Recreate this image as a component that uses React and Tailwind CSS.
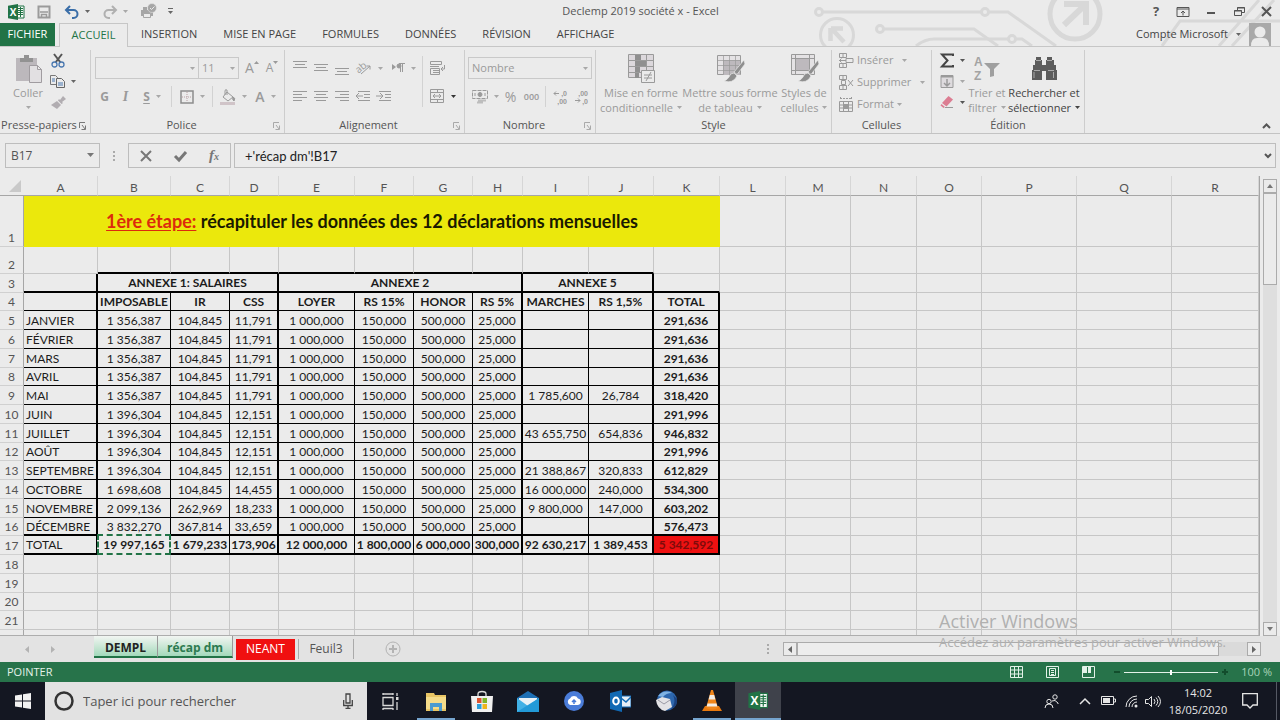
const MONTHS = [
    ['JANVIER', '1 356,387', '104,845', '11,791', '', '', '291,636'],
    ['FÉVRIER', '1 356,387', '104,845', '11,791', '', '', '291,636'],
    ['MARS', '1 356,387', '104,845', '11,791', '', '', '291,636'],
    ['AVRIL', '1 356,387', '104,845', '11,791', '', '', '291,636'],
    ['MAI', '1 356,387', '104,845', '11,791', '1 785,600', '26,784', '318,420'],
    ['JUIN', '1 396,304', '104,845', '12,151', '', '', '291,996'],
    ['JUILLET', '1 396,304', '104,845', '12,151', '43 655,750', '654,836', '946,832'],
    ['AOÛT', '1 396,304', '104,845', '12,151', '', '', '291,996'],
    ['SEPTEMBRE', '1 396,304', '104,845', '12,151', '21 388,867', '320,833', '612,829'],
    ['OCTOBRE', '1 698,608', '104,845', '14,455', '16 000,000', '240,000', '534,300'],
    ['NOVEMBRE', '2 099,136', '262,969', '18,233', '9 800,000', '147,000', '603,202'],
    ['DÉCEMBRE', '3 832,270', '367,814', '33,659', '', '', '576,473'],
];
const ANNEXE2 = ['1 000,000', '150,000', '500,000', '25,000'];
const HEADINGS = ['', 'IMPOSABLE', 'IR', 'CSS', 'LOYER', 'RS 15%', 'HONOR', 'RS 5%', 'MARCHES', 'RS 1,5%', 'TOTAL'];
const TOTALS = ['TOTAL', '19 997,165', '1 679,233', '173,906', '12 000,000', '1 800,000', '6 000,000', '300,000', '92 630,217', '1 389,453', '5 342,592'];
const LETTERS = 'ABCDEFGHIJKLMNOPQR'.split('');
const COL_WIDTHS = [
    'w-[24px]', 'w-[74px]', 'w-[73px]', 'w-[59px]', 'w-[49px]', 'w-[76px]', 'w-[59px]', 'w-[59px]', 'w-[50px]',
    'w-[66px]', 'w-[65px]', 'w-[66px]', 'w-[66px]', 'w-[65px]', 'w-[66px]', 'w-[65px]', 'w-[95px]', 'w-[95px]', '',
];
// columns followed by a thick vertical rule: A, D, H, J, K
const THICK = [0, 3, 7, 9, 10];

const Caret = ({ className = 'text-[#a8a8a8]' }) => (
    <svg className={`shrink-0 ${className}`} width="5" height="3" viewBox="0 0 5 3" fill="currentColor">
        <path d="M0 0h5L2.5 3z" />
    </svg>
);

const Svg = ({ w = 16, h = 16, className = '', children }) => (
    <svg className={`shrink-0 overflow-visible ${className}`} width={w} height={h} viewBox={`0 0 ${w} ${h}`} fill="none" stroke="currentColor">
        {children}
    </svg>
);

const ExcelLogo = ({ w = 17, h = 16 }) => (
    <svg width={w} height={h} viewBox="0 0 17 16" className="shrink-0">
        <path d="M8 2h8v12H8z" fill="#f4f8f5" stroke="#217346" />
        <path d="M10 4.5h5M10 6.5h5M10 8.5h5M10 10.5h5M12.5 3v10" stroke="#217346" />
        <path d="M0 1.8L10 0v16L0 14.2z" fill="#217346" />
        <text x="5" y="11.5" textAnchor="middle" fontSize="10" fontWeight="700" fill="#fff" fontFamily="Open Sans">X</text>
    </svg>
);

/* ---------- title bar ---------- */

const Circuit = () => (
    <svg className="pointer-events-none absolute right-0 top-0" width="470" height="46" viewBox="810 0 470 46" fill="none" stroke="#d8d8d8" strokeWidth="3">
        <circle cx="819" cy="12" r="3.5" />
        <path d="M823 12h158M989 12h19l48 34" />
        <circle cx="985" cy="12" r="3.5" />
        <circle cx="837" cy="35" r="16.5" />
        <path d="M843 28.500h-12M830.500 41V28M831 28l13 14" strokeWidth="4.500" />
        <circle cx="880" cy="29" r="3.5" />
        <path d="M884 29h90l24 17" />
        <path d="M916 46q9-7 18-7h74" />
        <circle cx="1012" cy="39" r="3.5" />
        <path d="M1016 39h6l10 7" />
        <circle cx="1075" cy="14" r="25" strokeWidth="5" />
        <path d="M1064 4h22v21M1086 4l-22 21" strokeWidth="6" />
        <path d="M1162 46l18-25h100M1219 46l40-46M1232 46l42-46" />
    </svg>
);

const TitleBar = () => (
    <div className="flex h-[23px] items-center">
        <div className="flex flex-1 items-center pl-[8px] text-[#9b9b9b]">
            <ExcelLogo />
            <button aria-label="Enregistrer" className="ml-[12px]">
                <Svg w={14} h={14}>
                    <path d="M1.5 1.5h11v11h-11z" strokeWidth="2" />
                    <path d="M3 7h8M4.5 13V9.500h5V13" strokeWidth="1.500" />
                </Svg>
            </button>
            <button aria-label="Annuler" className="ml-[13px] flex items-center gap-[6px] text-[#3a6ea8]">
                <Svg w={15} h={14}>
                    <path d="M2 5h7.500a4 4 0 010 8H8M6 1L2 5l4 4" strokeWidth="2" />
                </Svg>
                <Caret className="text-[#666]" />
            </button>
            <button aria-label="Rétablir" className="ml-[13px] flex items-center gap-[5px] text-[#b0b0b0]">
                <Svg w={15} h={14}>
                    <path d="M13 5H5.500a4 4 0 000 8H7M9 1l4 4-4 4" strokeWidth="2" />
                </Svg>
                <Caret />
            </button>
            <button aria-label="Aperçu et impression" className="ml-[13px] text-[#a6a6a6]">
                <Svg w={16} h={15}>
                    <path d="M0 6h12v6H0zM2 3h4v3H2z" fill="currentColor" stroke="none" />
                    <path d="M2.500 9.500h7v4h-7z" fill="#ebebeb" />
                    <circle cx="11" cy="4" r="4.500" fill="currentColor" stroke="#ebebeb" strokeWidth=".5" />
                    <path d="M9 4l1.500 1.500L13.500 2.500" stroke="#ebebeb" />
                </Svg>
            </button>
            <button aria-label="Personnaliser" className="ml-[11px] text-[#666]">
                <Svg w={5} h={7}>
                    <path d="M0 .5h5" />
                    <path d="M0 3h5L2.500 6z" fill="currentColor" stroke="none" />
                </Svg>
            </button>
        </div>
        <h1 className="text-[11px] text-[#555]">Declemp 2019 société x - Excel</h1>
        <div className="flex flex-1 items-center justify-end gap-[14px] pr-[7px] text-[#555]">
            <button aria-label="Aide" className="w-[12px] text-[13px] font-bold leading-none">?</button>
            <button aria-label="Options d'affichage du ruban">
                <Svg w={14} h={11}>
                    <path d="M1 1.500h12v9H1zM1 3h12M7 9.500V5M5 7l2-2 2 2" />
                </Svg>
            </button>
            <button aria-label="Réduire">
                <Svg w={14} h={11}>
                    <path d="M3 7h8" strokeWidth="2" />
                </Svg>
            </button>
            <button aria-label="Restaurer">
                <Svg w={14} h={11}>
                    <path d="M2.500 4.500h7v5h-7zM5.500 4V1.500h7v5H10M2 5h8M5 2h8" />
                </Svg>
            </button>
            <button aria-label="Fermer">
                <Svg w={13} h={11}>
                    <path d="M2 1l9 9M11 1l-9 9" strokeWidth="2" />
                </Svg>
            </button>
        </div>
    </div>
);

const TABS = ['INSERTION', 'MISE EN PAGE', 'FORMULES', 'DONNÉES', 'RÉVISION', 'AFFICHAGE'];

const RibbonTabs = () => (
    <nav className="flex h-[24px] items-stretch border-b border-[#c6c6c6] text-[11px] text-[#444]">
        <button className="w-[55px] bg-[#217346] text-white">FICHIER</button>
        <button className="relative -mb-px ml-[4px] w-[69px] border border-b-0 border-[#c6c6c6] bg-[#ebebeb] text-[#217346]">ACCUEIL</button>
        {TABS.map((t) => (
            <button key={t} className="px-[13px]">{t}</button>
        ))}
        <button className="ml-auto flex items-center gap-[8px] pr-[9px]">
            Compte Microsoft
            <Caret className="text-[#666]" />
            <svg width="22" height="23" viewBox="0 0 22 23">
                <path d="M0 0h22v23H0z" fill="#a9a9a9" />
                <circle cx="11" cy="9" r="5.500" fill="#ebebeb" />
                <path d="M2 23q0-8 6-8h6q6 0 6 8z" fill="#ebebeb" />
            </svg>
        </button>
    </nav>
);

/* ---------- ribbon ---------- */

const Group = ({ label, width, launcher, children }) => (
    <section className={`flex shrink-0 flex-col ${width}`}>
        <div className="flex flex-1">
            <div className="min-w-0 flex-1">{children}</div>
            <div className="mt-[3px] w-px bg-[#cdcdcd]" />
        </div>
        <div className="relative flex h-[15px] items-center justify-center border-r border-[#cdcdcd] text-[11px] font-medium text-[#555]">
            <span className={launcher ? 'pr-[12px]' : ''}>{label}</span>
            {launcher && (
                <button aria-label={`Options ${label}`} className={`absolute right-[4px] ${launcher}`}>
                    <Svg w={7} h={8}>
                        <path d="M.5 6V.5H6M3 3l3 4M6.500 3.500v4h-4" />
                    </Svg>
                </button>
            )}
        </div>
    </section>
);

const Tool = ({ label, caret, width = 'w-[21px]', caretColor, children }) => (
    <button aria-label={label} className={`flex h-[20px] shrink-0 items-center justify-center gap-[6px] ${width}`}>
        {children}
        {caret && <Caret className={caretColor} />}
    </button>
);

const Lines = ({ rows, h = 12 }) => (
    <Svg w={14} h={h}>
        {rows.map(([a, b, y]) => (
            <path key={y} d={`M${a} ${y}.5H${b}`} />
        ))}
    </Svg>
);

const Big = ({ width, lines, className = 'text-[#9a9a9a]', caretColor, children }) => (
    <button className={`flex shrink-0 flex-col items-center text-[11px] leading-[15px] ${width} ${className}`}>
        <span className="flex h-[34px] items-center">{children}</span>
        <span className="whitespace-nowrap">{lines[0]}</span>
        <span className="flex items-center gap-[4px] whitespace-nowrap">
            {lines[1]}
            <Caret className={caretColor} />
        </span>
    </button>
);

const Divider = () => <span className="mx-[3px] h-[21px] w-px shrink-0 bg-[#d2d2d2]" />;

const Select = ({ label, width, value }) => (
    <div className={`relative h-[22px] ${width}`}>
        <select aria-label={label} defaultValue={value} className="block h-full w-full appearance-none border border-[#c9c9c9] pl-[3px] text-[11px] text-[#9a9a9a]">
            <option>{value}</option>
        </select>
        <span className="pointer-events-none absolute inset-y-0 right-[4px] flex items-center">
            <Caret />
        </span>
    </div>
);

const Brush = () => (
    <>
        <path d="M29 7L19 19l3 2.500L30 11z" fill="#8f8f8f" stroke="#ebebeb" strokeWidth=".7" />
        <path d="M19 20q-4 0-5 4-2 3-5 4 9 3 13-5z" fill="#8f8f8f" stroke="#ebebeb" strokeWidth=".7" />
    </>
);

const CellIcon = ({ kind }) => (
    <Svg w={16} h={15}>
        {kind !== 'format' && <path d="M1.500.500h7v4h-7zM5 .5v4M1.500 10.500h7v4h-7zM5 10.500v4" />}
        {kind === 'insert' && <path d="M8 5.500h7v4H8zM8 7.500H1M3.500 5.500l-2 2 2 2" />}
        {kind === 'delete' && <path d="M3.500 5.500h4v4h-4zM10 5l5 6M15 5l-5 6" />}
        {kind === 'format' && (
            <>
                <path d="M2.500 0v3M13.500 0v3M2 1.500h12" strokeDasharray="2 1" />
                <path d="M1.500 4.500h13v10h-13zM5.500 4v10M10.500 4v10M1 8h14M1 11h14" />
                <path d="M5 7h6v5H5z" fill="currentColor" stroke="none" />
            </>
        )}
    </Svg>
);

const Ribbon = () => (
    <div className="flex h-[87px] shrink-0 items-stretch overflow-hidden border-b border-[#c3c3c3] text-[#9a9a9a]">
        <Group label="Presse-papiers" width="w-[91px]" launcher="text-[#777]">
            <div className="flex pl-[11px]">
                <button className="flex w-[34px] flex-col items-center pt-[7px] text-[11px] leading-[17px]">
                    <Svg w={27} h={30} className="text-[#a9a5a9]">
                        <path d="M1 4h21v23H1z" fill="#bcb8bc" stroke="none" />
                        <path d="M5 4h4V1h5v3h4v4H5z" fill="#929292" stroke="none" />
                        <path d="M14.500 11.500h8l4 4v13h-12zM22.500 11.500v4h4" fill="#e2e0e2" stroke="#a09ca0" />
                    </Svg>
                    <span>Coller</span>
                    <Caret className="mt-[5px] text-[#a8a8a8]" />
                </button>
                <div className="flex flex-col gap-[1px] pl-[3px] pt-[3px]">
                    <Tool label="Couper" width="w-[20px]">
                        <Svg w={14} h={15}>
                            <path d="M3 1l6.500 8.500M11 1L4.500 9.500" stroke="#555" strokeWidth="2" />
                            <circle cx="3.500" cy="11.500" r="2.500" stroke="#4a78b0" strokeWidth="1.300" />
                            <circle cx="10.500" cy="11.500" r="2.500" stroke="#4a78b0" strokeWidth="1.300" />
                        </Svg>
                    </Tool>
                    <Tool label="Copier" width="w-[30px]" caret caretColor="text-[#666]">
                        <Svg w={15} h={13}>
                            <path d="M.5.500h5l2 2v7h-7z" stroke="#777" />
                            <path d="M6.500 3.500h5l3 3v6h-8z" fill="#ebebeb" stroke="#666" />
                            <path d="M2 4h3M2 6h3M8 8h5M8 10h5" stroke="#4a78b0" />
                        </Svg>
                    </Tool>
                    <Tool label="Reproduire la mise en forme" width="w-[20px]">
                        <Svg w={15} h={13}>
                            <path d="M12 0l3 3-4 3-2-2zM8 3l4 4-1.500 1L7 4.500zM6 5l4 4-4 4-6-4z" fill="#b1adb1" stroke="none" />
                        </Svg>
                    </Tool>
                </div>
            </div>
        </Group>

        <Group label="Police" width="w-[194px]" launcher="text-[#a9a9a9]">
            <div className="flex h-[32px] items-end pl-[4px]">
                <Select label="Police" width="w-[104px]" value="" />
                <Select label="Taille" width="-ml-px w-[41px]" value="11" />
                <button aria-label="Augmenter la taille" className="ml-[6px] flex text-[14px] leading-[22px]">
                    A<Svg w={5} h={3} className="mt-[4px]"><path d="M0 3h5L2.500 0z" fill="currentColor" stroke="none" /></Svg>
                </button>
                <button aria-label="Réduire la taille" className="ml-[7px] flex text-[12px] leading-[22px]">
                    A<Svg w={5} h={3} className="mt-[4px]"><path d="M0 0h5L2.500 3z" fill="currentColor" stroke="none" /></Svg>
                </button>
            </div>
            <div className="flex items-center pl-[3px] pt-[7px] text-[12px]">
                <Tool label="Gras"><b>G</b></Tool>
                <Tool label="Italique"><i className="font-['Liberation_Serif'] text-[14px] font-bold">I</i></Tool>
                <Tool label="Souligné" width="w-[32px]" caret><b className="underline underline-offset-2">S</b></Tool>
                <Divider />
                <Tool label="Bordures" width="w-[34px]" caret>
                    <Svg w={14} h={14}>
                        <path d="M1 1h12v12H1z" stroke="#8d8d8d" strokeWidth="1.500" />
                        <path d="M7 2v10M2 7h10" stroke="#b8a0a4" strokeDasharray="1 1" />
                    </Svg>
                </Tool>
                <Divider />
                <Tool label="Couleur de remplissage" width="w-[34px]" caret>
                    <Svg w={16} h={16}>
                        <path d="M7 3l6 5-5 4-5-4zM5 6V2q0-2 2-1v5" />
                        <path d="M13 8q3 1 1 4-2-1-1-4z" fill="currentColor" />
                        <path d="M0 14.500h15" stroke="#d0c4c8" strokeWidth="3" />
                    </Svg>
                </Tool>
                <Tool label="Couleur de police" width="w-[31px]" caret><span className="text-[14px] font-semibold">A</span></Tool>
            </div>
        </Group>

        <Group label="Alignement" width="w-[180px]" launcher="text-[#a9a9a9]">
            <div className="flex">
                <div className="pl-[4px] pt-[10px]">
                    <div className="flex h-[22px] items-center">
                        <Tool label="Aligner en haut"><Lines rows={[[0, 14, 0], [2, 12, 3], [0, 14, 6]]} h={14} /></Tool>
                        <Tool label="Aligner au centre"><Lines rows={[[0, 14, 3], [2, 12, 6], [0, 14, 9]]} h={14} /></Tool>
                        <Tool label="Aligner en bas"><Lines rows={[[0, 14, 7], [2, 12, 10], [0, 14, 13]]} h={14} /></Tool>
                        <Tool label="Orientation" width="w-[34px]" caret>
                            <Svg w={16} h={14}>
                                <text x="0" y="10" fontSize="10" fill="currentColor" stroke="none" transform="rotate(-40 5 8)">ab</text>
                                <path d="M5 13L14 5M10.500 5H14v3.500" />
                            </Svg>
                        </Tool>
                        <Tool label="Sens du texte" width="w-[36px]" caret>
                            <Svg w={13} h={11}>
                                <path d="M0 1l4 3-4 3z" fill="currentColor" stroke="none" />
                                <path d="M8.500 0v9M10.500 0v9M7 .5h6" />
                                <circle cx="7" cy="3" r="2" fill="currentColor" />
                            </Svg>
                        </Tool>
                    </div>
                    <div className="flex items-center pt-[7px]">
                        <Tool label="Aligner à gauche"><Lines rows={[[0, 14, 1], [0, 9, 4], [0, 14, 7], [0, 9, 10]]} /></Tool>
                        <Tool label="Centrer"><Lines rows={[[0, 14, 1], [2, 12, 4], [0, 14, 7], [2, 12, 10]]} /></Tool>
                        <Tool label="Aligner à droite"><Lines rows={[[0, 14, 1], [5, 14, 4], [0, 14, 7], [5, 14, 10]]} /></Tool>
                        <Tool label="Diminuer le retrait">
                            <Svg w={15} h={12}><path d="M3 1.500h12M9 4.500h6M9 7.500h6M3 10.500h12M8 6H1M4 3L1 6l3 3" /></Svg>
                        </Tool>
                        <Tool label="Augmenter le retrait">
                            <Svg w={15} h={12}><path d="M3 1.500h12M9 4.500h6M9 7.500h6M3 10.500h12M0 6h7M4 3l3 3-3 3" /></Svg>
                        </Tool>
                    </div>
                </div>
                <div className="mt-[9px] h-[51px] w-px bg-[#d2d2d2]" />
                <div className="pl-[4px] pt-[10px]">
                    <div className="flex h-[22px] items-center">
                        <Tool label="Renvoyer à la ligne">
                            <Svg w={16} h={14}>
                                <path d="M.5.500h11v3H.5zM.5 7.500h9v6H.5zM0 5.500h9M3 9.500h6M3 11.500h6M14.500 4v4H11M13 6l-2 2 2 2" />
                            </Svg>
                        </Tool>
                    </div>
                    <div className="flex items-center pt-[7px]">
                        <Tool label="Fusionner et centrer" width="w-[31px]" caret caretColor="text-[#333]">
                            <Svg w={15} h={14}>
                                <path d="M.5.500h13v13H.5zM0 3.500h14M0 10.500h14M7.500 0v3M7.500 11v3M3 7h8M5 5L3 7l2 2M9 5l2 2-2 2" />
                            </Svg>
                        </Tool>
                    </div>
                </div>
            </div>
        </Group>

        <Group label="Nombre" width="w-[131px]" launcher="text-[#a9a9a9]">
            <div className="px-[3px] pt-[10px]">
                <Select label="Format de nombre" width="w-full" value="Nombre" />
                <div className="flex items-center pt-[7px] pl-[2px] text-[14px]">
                    <Tool label="Format comptable" width="w-[30px]" caret>
                        <Svg w={16} h={15}>
                            <path d="M.5 1.500h15v8H.5z" strokeDasharray="4 1" />
                            <path d="M3 4v3M13 4v3" />
                            <circle cx="8" cy="5.500" r="2" fill="currentColor" />
                            <path d="M6 11.500h8M5 13.500h6" stroke="#bdbdbd" strokeWidth="2" />
                        </Svg>
                    </Tool>
                    <Tool label="Pourcentage">%</Tool>
                    <Tool label="Séparateur de milliers"><span className="text-[9px] font-semibold">000</span></Tool>
                    <Divider />
                    {[['Ajouter une décimale', ',0', ',00', 'M6 3.500H1M3 1.500l-2 2 2 2'], ['Réduire les décimales', ',00', ',0', 'M1 10.500h5M4 8.500l2 2-2 2']].map(([l, a, b, d]) => (
                        <Tool key={l} label={l}>
                            <Svg w={14} h={14}>
                                <text x="14" y="6" textAnchor="end" fontSize="7" fontFamily="Liberation Sans" fontWeight="700" fill="currentColor" stroke="none">{a}</text>
                                <text x="14" y="14" textAnchor="end" fontSize="7" fontFamily="Liberation Sans" fontWeight="700" fill="currentColor" stroke="none">{b}</text>
                                <path d={d} />
                            </Svg>
                        </Tool>
                    ))}
                </div>
            </div>
        </Group>

        <Group label="Style" width="w-[236px]">
            <div className="flex pl-[5px] pt-[4px]">
                <Big width="w-[80px]" lines={['Mise en forme', 'conditionnelle']}>
                    <Svg w={30} h={30}>
                        <path d="M2.500 1.500h25v23h-25zM2.500 7.500h25M2.500 13.500h25M2.500 19.500h25M9.500 1v24M20.500 1v24" fill="#dcd8dc" />
                        <path d="M9 2h6v5H9zM9 8h11v5H9zM9 14h5v5H9zM9 20h4v5H9z" fill="#8f8f8f" stroke="none" />
                        <path d="M15.500 17.500h13v12h-13z" fill="#ebebeb" />
                        <path d="M18 22h8M18 25h8M25 19l-5 9" />
                    </Svg>
                </Big>
                <Big width="w-[98px]" lines={['Mettre sous forme', 'de tableau']}>
                    <Svg w={30} h={30}>
                        <path d="M2.500 2.500h23v19h-23z" fill="#e4e2e4" />
                        <path d="M8 7h17v15H8z" fill="#bdb9bd" stroke="none" />
                        <path d="M2.500 7.500h23M2.500 12.500h23M2.500 17.500h23M8.500 2v20M14.500 2v20M20.500 2v20" strokeWidth=".7" />
                        <Brush />
                    </Svg>
                </Big>
                <Big width="w-[50px]" lines={['Styles de', 'cellules']}>
                    <Svg w={30} h={30}>
                        <path d="M2.500 1.500h23v20h-23zM2.500 5.500h23M2.500 17.500h23M6.500 1v20M20.500 1v20" fill="#e4e2e4" />
                        <path d="M7 6h13v11H7z" fill="#bdb9bd" stroke="none" />
                        <Brush />
                    </Svg>
                </Big>
            </div>
        </Group>

        <Group label="Cellules" width="w-[100px]">
            <div className="flex flex-col items-start gap-[1px] pl-[6px] pt-[3px] text-[11px]">
                <button className="flex h-[21px] items-center gap-[3px]">
                    <CellIcon kind="insert" />Insérer<Caret className="ml-[6px] text-[#a8a8a8]" />
                </button>
                <button className="flex h-[21px] items-center gap-[3px]">
                    <CellIcon kind="delete" />Supprimer<Caret className="ml-[6px] text-[#a8a8a8]" />
                </button>
                <button className="flex h-[21px] items-center gap-[3px]">
                    <CellIcon kind="format" />Format<Caret />
                </button>
            </div>
        </Group>

        <Group label="Édition" width="w-[153px]">
            <div className="flex">
                <div className="flex flex-col gap-[1px] pl-[4px] pt-[3px]">
                    <Tool label="Somme automatique" width="w-[32px]" caret caretColor="text-[#555]">
                        <Svg w={14} h={15}><path d="M13 3V1.500H2L7.500 7.500 2 13.500h11V12" stroke="#444" strokeWidth="2" /></Svg>
                    </Tool>
                    <Tool label="Remplissage" width="w-[32px]" caret>
                        <Svg w={14} h={15}>
                            <path d="M1 1.500h12v12H1z" fill="#dedbde" />
                            <path d="M1 2.500h12" strokeWidth="2" />
                            <path d="M7 5v7M4 9l3 3 3-3" strokeWidth="1.500" />
                        </Svg>
                    </Tool>
                    <Tool label="Effacer" width="w-[32px]" caret caretColor="text-[#555]">
                        <Svg w={14} h={15}>
                            <path d="M8.500 1L13 4.500 6.500 11.500 2 8z" fill="#dc7d92" stroke="none" />
                            <path d="M1.500 9l3.500 3-1.500 1L.5 10.500z" fill="#dc7d92" stroke="none" />
                            <path d="M5 12.500h8" stroke="#999" />
                        </Svg>
                    </Tool>
                </div>
                <div className="flex gap-[2px] pt-[4px]">
                    <Big width="w-[38px]" lines={['Trier et', 'filtrer']}>
                        <Svg w={28} h={27}>
                            <text x="1" y="11" fontSize="12" fontFamily="Liberation Sans" fontWeight="700" fill="#a3a3a3" stroke="none">A</text>
                            <text x="1" y="25" fontSize="12" fontFamily="Liberation Sans" fontWeight="700" fill="#a3a3a3" stroke="none">Z</text>
                            <path d="M11 8h16l-6 6v7l-4 1v-8z" fill="#9f9f9f" stroke="none" />
                        </Svg>
                    </Big>
                    <Big width="w-[72px]" lines={['Rechercher et', 'sélectionner']} className="text-[#444]" caretColor="text-[#444]">
                        <svg width="26" height="24" viewBox="0 0 26 24" fill="#5c5c5c">
                            <path d="M5 4V1h5v3h1v5h4V4h1V1h5v3h2v5h2v5h1v10H15v-9h-4v9H1V14h1V9h2V4z" />
                            <path d="M3 14.500h6M17 14.500h6M5 4.500h5M16 4.500h5M3 16v6M22.500 16v6" stroke="#aaa" />
                        </svg>
                    </Big>
                </div>
            </div>
        </Group>
        <button aria-label="Réduire le ruban" className="mb-[4px] ml-auto mr-[9px] self-end text-[#555]">
            <Svg w={9} h={6}><path d="M1 5l3.500-3.500L8 5" strokeWidth="2" /></Svg>
        </button>
    </div>
);

const FormulaBar = () => (
    <div className="flex h-[42px] shrink-0 items-start gap-[3px] pl-[5px] pr-[4px] pt-[9px] text-[#555]">
        <div className="relative h-[25px] w-[95px]">
            <input aria-label="Zone Nom" defaultValue="B17" className="block h-full w-full border border-[#bdbdbd] pl-[5px] text-[12px]" />
            <svg className="pointer-events-none absolute right-[6px] top-[10px]" width="7" height="4" fill="#777"><path d="M0 0h7L3.500 4z" /></svg>
        </div>
        <svg width="22" height="25" viewBox="0 0 22 25" fill="#aaa"><path d="M10 8h2v2h-2zM10 12h2v2h-2zM10 16h2v2h-2z" /></svg>
        <div className="flex h-[25px] w-[103px] items-center justify-around border border-[#bdbdbd] text-[#777]">
            <button aria-label="Annuler la saisie"><Svg w={12} h={12}><path d="M1 1l10 10M11 1L1 11" strokeWidth="2" /></Svg></button>
            <button aria-label="Entrer"><Svg w={13} h={12}><path d="M1 6l4 4 7-8" strokeWidth="3" /></Svg></button>
            <button aria-label="Insérer une fonction" className="font-['Liberation_Serif'] text-[15px] font-bold italic leading-none">
                f<span className="text-[10px]">x</span>
            </button>
        </div>
        <div className="relative h-[25px] flex-1">
            <input aria-label="Barre de formule" defaultValue="+'récap dm'!B17" className="block h-full w-full border border-[#bdbdbd] pl-[10px] font-[Lato] text-[13px] text-[#222]" />
            <Svg w={8} h={6} className="absolute right-[4px] top-[10px]"><path d="M1 1l3 3 3-3" strokeWidth="2" /></Svg>
        </div>
    </div>
);

/* ---------- sheet ---------- */

const rowHeight = (n) => (n % 4 === 0 ? 'h-[18px]' : 'h-[19px]');

const RowHead = ({ n }) => (
    <th scope="row" className="border-b border-r border-b-[#d0d0d0] border-r-[#a6a6a6] p-0 align-bottom font-normal leading-[17px] text-[#555]">{n}</th>
);

const Blank = ({ from, to = 18, cls = '' }) =>
    Array.from({ length: to - from }, (_, i) => <td key={i} className={`border-b border-r border-[#c6c6c6] p-0 ${cls}`} />);

const CopyMarquee = () => (
    <>
        <span className="absolute -bottom-[2px] -left-px -right-px -top-[2px] z-10 border-2 border-[#ebebeb]" />
        <span className="absolute -bottom-[2px] -left-px -right-px -top-[2px] z-10 border-2 border-dashed border-[#217346]" />
    </>
);

const DataCells = ({ cells, bold, head, last }) =>
    cells.map((v, i) => (
        <td
            key={i}
            className={[
                'relative whitespace-nowrap border-black p-0',
                THICK.includes(i) ? 'border-r-2' : 'border-r',
                bold ? 'border-b-2' : 'border-b',
                i === 0 ? 'pl-[2px] text-left' : 'text-center',
                i > 0 && (last || head || i === 10) ? 'font-bold' : '',
                last && i === 10 ? 'bg-[#ee1111] text-[#7d0b0b]' : 'text-[#1c1c1c]',
            ].join(' ')}
        >
            {v}
            {last && i === 1 && <CopyMarquee />}
        </td>
    ));

const Sheet = () => (
    <div className="relative flex min-h-0 flex-1">
        <div className="min-w-0 flex-1 overflow-hidden border-b border-[#adadad]">
            <table className="w-full table-fixed border-separate border-spacing-0 border-r border-[#a6a6a6] font-[Lato] text-[12px] leading-[15px]">
                <colgroup>
                    {COL_WIDTHS.map((w, i) => <col key={i} className={w} />)}
                </colgroup>
                <thead>
                    <tr className="h-[20px] text-[#555]">
                        <td className="border-b border-[#a6a6a6] p-0">
                            <svg width="12" height="12" className="ml-[9px]"><path d="M12 0v12H0z" fill="#c9c9c9" /></svg>
                        </td>
                        {LETTERS.map((l) => (
                            <th key={l} scope="col" className="border-b border-r border-b-[#a6a6a6] border-r-[#d6d6d6] p-0 align-bottom font-normal">{l}</th>
                        ))}
                    </tr>
                </thead>
                <tbody>
                    <tr className="h-[51px]">
                        <RowHead n={1} />
                        <td colSpan={11} className="bg-[#ebe80c] p-0 text-center text-[18px] font-bold text-[#1a1a00] [font-variant-ligatures:none]">
                            <span className="text-[#dd2a0c] underline underline-offset-2">1ère étape:</span> récapituler les données des 12 déclarations mensuelles
                        </td>
                        <Blank from={11} />
                    </tr>
                    <tr className="h-[27px]">
                        <RowHead n={2} />
                        <Blank from={0} to={1} />
                        <Blank from={1} to={10} cls="border-b-2 border-b-black" />
                        <Blank from={10} />
                    </tr>
                    <tr className="h-[19px] font-bold text-[#1c1c1c]">
                        <RowHead n={3} />
                        <td className="border-b-2 border-r-2 border-black p-0" />
                        <td colSpan={3} className="border-b-2 border-r-2 border-black p-0 text-center">ANNEXE 1: SALAIRES</td>
                        <td colSpan={4} className="border-b-2 border-r-2 border-black p-0 text-center">ANNEXE 2</td>
                        <td colSpan={2} className="border-b-2 border-r-2 border-black p-0 text-center">ANNEXE 5</td>
                        <Blank from={10} to={11} cls="border-b-2 border-b-black" />
                        <Blank from={11} />
                    </tr>
                    <tr className={rowHeight(4)}>
                        <RowHead n={4} />
                        <DataCells cells={HEADINGS} head />
                        <Blank from={11} />
                    </tr>
                    {MONTHS.map(([name, b, c, d, i, j, k], r) => (
                        <tr key={name} className={rowHeight(r + 5)}>
                            <RowHead n={r + 5} />
                            <DataCells cells={[name, b, c, d, ...ANNEXE2, i, j, k]} bold={r === 11} />
                            <Blank from={11} />
                        </tr>
                    ))}
                    <tr className={rowHeight(17)}>
                        <RowHead n={17} />
                        <DataCells cells={TOTALS} bold last />
                        <Blank from={11} />
                    </tr>
                    {[18, 19, 20, 21].map((n) => (
                        <tr key={n} className={rowHeight(n)}>
                            <RowHead n={n} />
                            <Blank from={0} />
                        </tr>
                    ))}
                    <tr className={rowHeight(22)}>
                        <RowHead />
                        <Blank from={0} />
                    </tr>
                </tbody>
            </table>
        </div>
        <div className="mr-[3px] mt-[3px] flex w-[17px] flex-col items-end">
            <button aria-label="Défiler vers le haut" className="flex h-[14px] w-[14px] shrink-0 items-center justify-center border border-[#ababab]">
                <svg width="6" height="4" fill="#777"><path d="M0 4h6L3 0z" /></svg>
            </button>
            <div className="w-[14px] flex-1 bg-[#dedede]">
                <div className="h-[92px] border border-[#ababab] bg-[#ebebeb]" />
            </div>
            <button aria-label="Défiler vers le bas" className="flex h-[14px] w-[14px] shrink-0 items-center justify-center border border-[#ababab]">
                <svg width="6" height="4" fill="#777"><path d="M0 0h6L3 4z" /></svg>
            </button>
        </div>
        <div className="pointer-events-none absolute -bottom-[16px] right-[54px] z-10 whitespace-nowrap text-[#b0b0b0]">
            <p className="text-[18px] leading-[22px]">Activer Windows</p>
            <p className="text-[13px] leading-[20px]">Accédez aux paramètres pour activer Windows.</p>
        </div>
    </div>
);

const SheetTabs = () => (
    <div className="flex h-[26px] shrink-0 items-center bg-[#e3e3e3] text-[12px] text-[#555]">
        <div className="mr-[14px] flex w-[80px] justify-center gap-[22px]">
            <svg width="4" height="7" fill="#b3b3b3"><path d="M4 0v7L0 3.500z" /></svg>
            <svg width="4" height="7" fill="#b3b3b3"><path d="M0 0v7l4-3.500z" /></svg>
        </div>
        <button className="h-[22px] w-[64px] self-start border-b-2 border-r border-b-[#217346] border-r-[#999] bg-gradient-to-b from-[#f2f5f2] to-[#a3d9bb] pt-[3px] font-bold text-[#222]">DEMPL</button>
        <button className="h-[22px] w-[75px] self-start border-b-2 border-r border-b-[#217346] border-r-[#999] bg-gradient-to-b from-[#f2f5f2] to-[#a3d9bb] pt-[3px] font-bold text-[#2c7a50]">récap dm</button>
        <button className="ml-[3px] h-[21px] w-[59px] bg-[#f01010] text-white">NEANT</button>
        <button className="ml-[3px] h-[20px] w-[56px] border-x border-[#aaa]">Feuil3</button>
        <button aria-label="Nouvelle feuille" className="ml-[31px] text-[#b3b3b3]">
            <Svg w={16} h={16}><circle cx="8" cy="8" r="7" /><path d="M8 4v8M4 8h8" strokeWidth="2" /></Svg>
        </button>
        <svg className="ml-auto" width="2" height="10" fill="#aaa"><path d="M0 0h2v2H0zM0 4h2v2H0zM0 8h2v2H0z" /></svg>
        <div className="ml-[14px] mr-[19px] flex h-[14px] w-[478px] bg-[#dadada]">
            <button aria-label="Défiler à gauche" className="flex w-[14px] items-center justify-center border border-[#ababab] bg-[#ebebeb]">
                <svg width="4" height="7" fill="#666"><path d="M4 0v7L0 3.500z" /></svg>
            </button>
            <div className="w-[422px] border border-[#ababab] bg-[#ededed]" />
            <button aria-label="Défiler à droite" className="ml-auto flex w-[14px] items-center justify-center border border-[#ababab] bg-[#ebebeb]">
                <svg width="4" height="7" fill="#666"><path d="M0 0v7l4-3.500z" /></svg>
            </button>
        </div>
    </div>
);

const StatusBar = () => (
    <div className="flex h-[20px] shrink-0 items-center bg-[#27734a] pl-[7px] pr-[8px] text-[11px] text-[#e4f2e9]">
        <span>POINTER</span>
        <div className="ml-auto flex items-center">
            <div className="mr-[18px] flex gap-[23px]">
                <button aria-label="Normal"><Svg w={13} h={12}><path d="M.5.500h12v11H.5zM0 4h13M0 8h13M4.500 0v12M8.500 0v12" /></Svg></button>
                <button aria-label="Mise en page"><Svg w={13} h={12}><path d="M.5.500h12v11H.5zM3.500 2.500h6v7h-6zM5 4.500h3M5 6.500h3M5 8.500h3" /></Svg></button>
                <button aria-label="Aperçu des sauts de page"><Svg w={13} h={12}><path d="M.5.500h12v11H.5z" /><path d="M1 1h4v6H1zM6 1h3v6H6z" fill="currentColor" stroke="none" /></Svg></button>
            </div>
            <button aria-label="Zoom arrière" className="text-[#124d2c]"><Svg w={8} h={8}><path d="M1 4h6" strokeWidth="2" /></Svg></button>
            <input
                type="range"
                aria-label="Zoom"
                defaultValue="50"
                className="mx-[3px] h-px w-[94px] appearance-none bg-[#e4f2e9] [&::-webkit-slider-thumb]:h-[5px] [&::-webkit-slider-thumb]:w-[2px] [&::-webkit-slider-thumb]:appearance-none [&::-webkit-slider-thumb]:bg-white"
            />
            <button aria-label="Zoom avant" className="text-[#124d2c]"><Svg w={8} h={8}><path d="M1 4h6M4 1v6" strokeWidth="2" /></Svg></button>
            <span className="ml-[12px] text-[#a9d3b9]">100 %</span>
        </div>
    </div>
);

/* ---------- taskbar ---------- */

const APPS = [
    {
        name: 'Affichage des tâches',
        icon: (
            <g fill="none" stroke="#d8d8d8" strokeWidth="1.300">
                <path d="M4 7.500h10v8H4zM4 5V3M14 5V3M4 4h10M4 20v-2M14 20v-2M4 18.500h10M18 3v3M18 12v8" />
                <path d="M17 7h2.500v3H17z" fill="#d8d8d8" stroke="none" />
            </g>
        ),
    },
    {
        name: 'Explorateur de fichiers',
        open: 'mx-[4px]',
        icon: (
            <>
                <path d="M1 3h8l1 2h11v16H1z" fill="#e8c565" />
                <path d="M1 7h20v12H1z" fill="#f5dc8a" />
                <path d="M5 21v-8h12v8h-3v-4H8v4z" fill="#4a9bd0" />
            </>
        ),
    },
    {
        name: 'Microsoft Store',
        icon: (
            <>
                <path d="M7 7V4q0-2.500 4-2.500T15 4v3" fill="none" stroke="#ddd" strokeWidth="1.300" />
                <path d="M0 6h22l-1 16H1z" fill="#f0f0f0" />
                <path d="M6 8h4.500v5H6z" fill="#dc5230" />
                <path d="M11.500 8H16v5h-4.500z" fill="#7eb52a" />
                <path d="M6 14h4.500v5H6z" fill="#2b9fdc" />
                <path d="M11.500 14H16v5h-4.500z" fill="#f0b41c" />
            </>
        ),
    },
    {
        name: 'Courrier',
        icon: (
            <>
                <path d="M0 8l11-7 11 7v13H0z" fill="#1d6fb4" />
                <path d="M2 8h18v9H2z" fill="#e8f1f6" />
                <path d="M0 8l11 8 11-8v14H0z" fill="#41b1e6" />
                <path d="M0 22L22 8v14z" fill="#229ad8" />
            </>
        ),
    },
    {
        name: 'Sauvegarde',
        icon: (
            <>
                <circle cx="11" cy="11" r="10" fill="#4a7cd8" />
                <path d="M7 15a3.500 3.500 0 010-6.500 4.500 4.500 0 018 0A3.300 3.300 0 0115 15z" fill="#fff" />
                <path d="M11 14v-4M9 12l2-2 2 2" stroke="#4a7cd8" strokeWidth="1.500" fill="none" />
            </>
        ),
    },
    {
        name: 'Outlook',
        icon: (
            <>
                <path d="M11 6h11v11H11z" fill="#e6eef6" stroke="#1069b4" />
                <path d="M12 8l5 4 5-5" fill="none" stroke="#1069b4" strokeWidth="1.500" />
                <path d="M1 3l12-3v22L1 19z" fill="#1069b4" />
                <ellipse cx="7" cy="11" rx="2.800" ry="3.500" fill="none" stroke="#fff" strokeWidth="2" />
            </>
        ),
    },
    {
        name: 'Thunderbird',
        icon: (
            <>
                <circle cx="12" cy="10.500" r="10" fill="#2d67ae" />
                <path d="M3 6Q9-1 17 3q-6 0-9 4z" fill="#7fb2e2" />
                <path d="M1 10l6-3 8 2 2 8-7 4q-8-2-9-11z" fill="#e3e3e6" />
                <path d="M3 10l6 4 6-4" fill="none" stroke="#9a9aa5" />
                <path d="M18 5q4 8-3 15 8-3 7-11z" fill="#1c417d" />
            </>
        ),
    },
    {
        name: 'VLC',
        open: 'mx-[4px]',
        icon: (
            <>
                <path d="M4 16h14l3 5H1z" fill="#e8790f" />
                <path d="M10 0h2l5 18q-6 3-12 0z" fill="#f08519" />
                <path d="M8.800 5h4.400l1.200 4.500H7.600zM6.500 13.500h9l.8 3H5.700z" fill="#f2ece4" />
            </>
        ),
    },
];

const Taskbar = () => (
    <div className="flex h-[38px] shrink-0 items-stretch bg-[#141722] text-white">
        <button aria-label="Démarrer" className="flex w-[45px] items-center justify-center">
            <svg width="16" height="16" fill="#f2f2f2"><path d="M0 2.500L7 1.500V7.500H0zM8 1.300L16 0v7.500H8zM0 8.500h7v6L0 13.500zM8 8.500h8V16L8 14.700z" /></svg>
        </button>
        <div className="flex w-[322px] items-center bg-[#e2e2e2] pl-[9px] pr-[14px] text-[#444]">
            <Svg w={20} h={20}><circle cx="10" cy="10" r="8.500" strokeWidth="2.500" stroke="#333" /></Svg>
            <input aria-label="Rechercher" placeholder="Taper ici pour rechercher" className="ml-[9px] min-w-0 flex-1 pt-[2px] text-[13px] placeholder:text-[#555]" />
            <Svg w={10} h={16}><path d="M3 1h4v9H3zM.7 7v5.500h8.600V7M5 12.500V15M2.500 15.300h5" strokeWidth="1.300" /></Svg>
        </div>
        {APPS.map(({ name, open, icon }) => (
            <button key={name} aria-label={name} className="flex w-[46px] flex-col items-center pt-[8px]">
                <svg width="22" height="22" viewBox="0 0 22 22">{icon}</svg>
                {open && <span className={`mt-auto h-[2px] self-stretch bg-[#76a5cf] ${open}`} />}
            </button>
        ))}
        <button aria-label="Excel" className="flex w-[46px] flex-col items-center bg-[#3f424b] pt-[9px]">
            <ExcelLogo w={21} h={19} />
            <span className="mt-auto h-[2px] self-stretch bg-[#76a5cf]" />
        </button>
        <div className="ml-auto flex items-center text-[#e6e6e6]">
            <Svg w={15} h={15}><circle cx="5" cy="7.500" r="2.200" /><path d="M1 14q0-4 4-4t4 4" /><circle cx="11" cy="3" r="2.200" /><path d="M8 7q3-2 6 2v1" /></Svg>
            <Svg w={12} h={8} className="ml-[20px]"><path d="M1 7l5-5 5 5" strokeWidth="1.500" /></Svg>
            <Svg w={15} h={10} className="ml-[10px]"><path d="M.5.500h12v8H.5zM13 3h1.500v3H13" /><path d="M2 2h7v5H2z" fill="currentColor" stroke="none" /></Svg>
            <Svg w={13} h={13} className="ml-[9px]"><path d="M1 12A11 11 0 0112 1M4 12a8 8 0 018-8M7 12a5 5 0 015-5" /><circle cx="11" cy="11" r="1.500" fill="currentColor" stroke="none" /></Svg>
            <Svg w={16} h={13} className="ml-[7px]"><path d="M.5 4.500h3l3-3v10l-3-3h-3zM9 4q2 2.500 0 5M11 2.500q3.500 4 0 8M13 1q5 5.500 0 11" /></Svg>
            <div className="ml-[7px] w-[60px] text-center text-[11px] leading-[17px]">
                <p>14:02</p>
                <p>18/05/2020</p>
            </div>
            <Svg w={16} h={16} className="ml-[14px]"><path d="M.7.700h14.600v11.300H11L8 15l-3-3H.7z" strokeWidth="1.300" /></Svg>
            <span className="ml-[18px] mr-[3px] h-[38px] w-px bg-[#555964]" />
        </div>
    </div>
);

export default function App() {
    return (
        <main className="relative flex h-screen flex-col overflow-hidden bg-[#ebebeb] font-['Open_Sans',sans-serif]">
            <header className="relative shrink-0">
                <Circuit />
                <div className="relative">
                    <TitleBar />
                    <RibbonTabs />
                </div>
            </header>
            <Ribbon />
            <FormulaBar />
            <Sheet />
            <SheetTabs />
            <StatusBar />
            <Taskbar />
        </main>
    );
}
